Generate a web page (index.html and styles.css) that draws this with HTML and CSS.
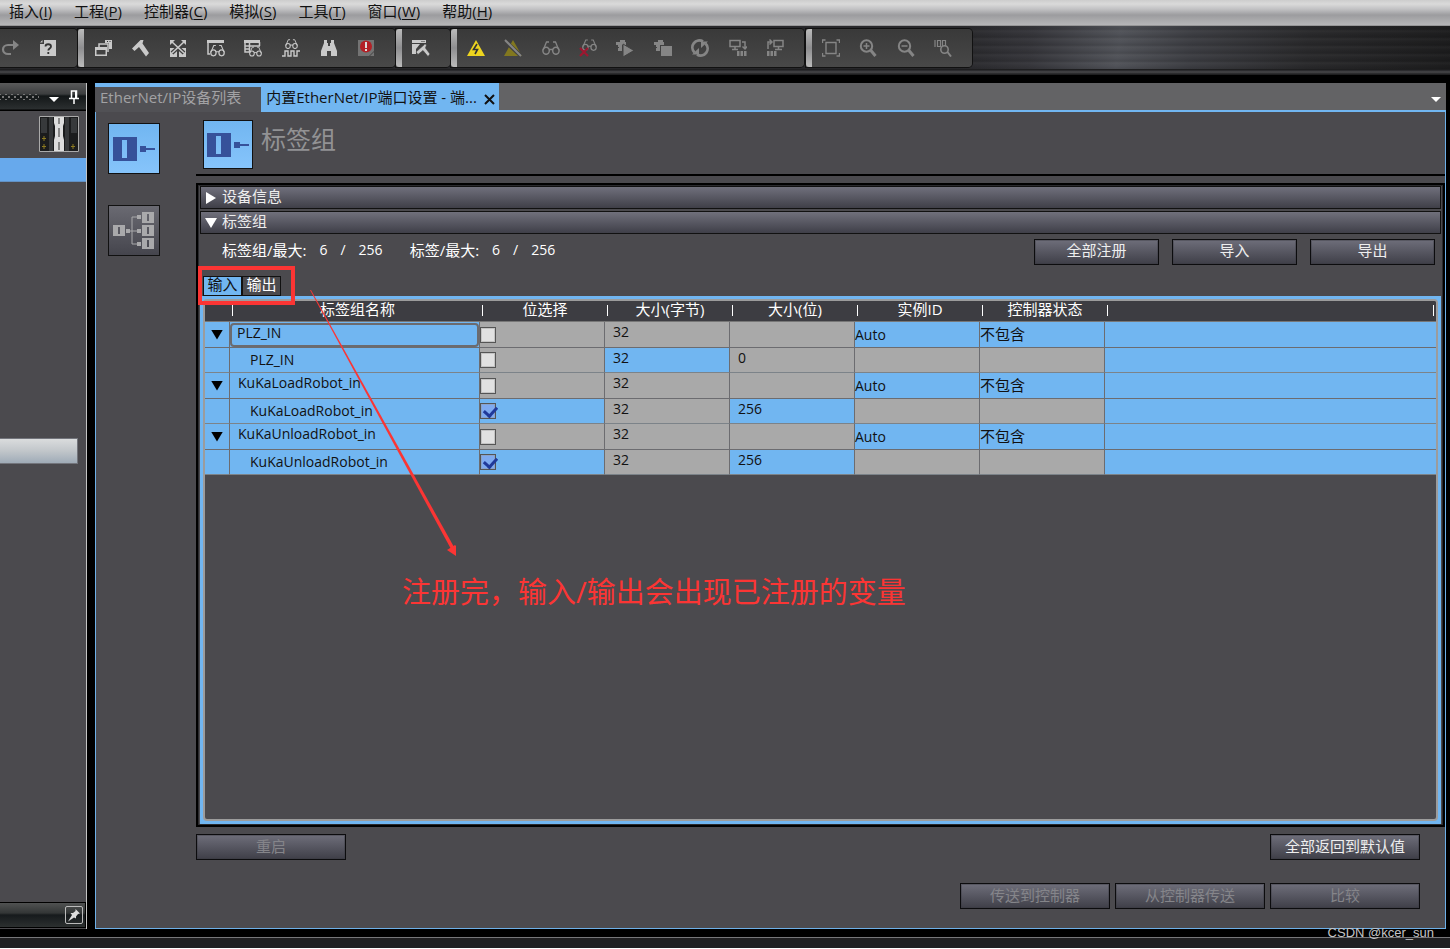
FILE: index.html
```html
<!DOCTYPE html>
<html lang="zh-CN">
<head>
<meta charset="utf-8">
<title>内置EtherNet/IP端口设置</title>
<link rel="stylesheet" href="styles.css">
</head>
<body>
<svg class="defs" width="0" height="0" aria-hidden="true">
  <defs>
    <symbol id="glasses" viewBox="0 0 18 14">
      <path d="M1.200 9 4.500 1H7M16.800 9 13.500 1H11M7 8.500h4" fill="none" stroke="currentColor" stroke-width="1.300"/>
      <ellipse cx="4.100" cy="9.800" rx="3.200" ry="3.500" fill="none" stroke="currentColor" stroke-width="1.500"/>
      <ellipse cx="13.900" cy="9.800" rx="3.200" ry="3.500" fill="none" stroke="currentColor" stroke-width="1.500"/>
    </symbol>
    <symbol id="tag" viewBox="0 0 42 24">
      <path fill="#36519a" fill-rule="evenodd" d="M0 0h24v24H0zM9 3v18h5V3z"/>
      <path fill="#36519a" d="M27 9h6v2h9v2h-9v2h-6z"/>
    </symbol>
  </defs>
</svg>
<div class="app">
  <nav class="menubar" aria-label="主菜单">
    <button>插入(<u>I</u>)</button>
    <button>工程(<u>P</u>)</button>
    <button>控制器(<u>C</u>)</button>
    <button>模拟(<u>S</u>)</button>
    <button>工具(<u>T</u>)</button>
    <button>窗口(<u>W</u>)</button>
    <button>帮助(<u>H</u>)</button>
  </nav>

  <div class="toolbar" role="toolbar" aria-label="工具栏">
    <div class="group group-first">
      <div class="tools tools-2">
        <button class="dim" aria-label="重做"><svg viewBox="0 0 18 18"><path d="M13 6H7a5 4.500 0 0 0 0 9h3" fill="none" stroke="currentColor" stroke-width="2.200"/><path d="M12 1l6 5-6 5z" fill="currentColor"/></svg></button>
        <button aria-label="帮助"><svg viewBox="0 0 18 18"><path d="M5 1h12v16H1V5h4zM1 3.500 3.500 1v2.500z" fill="currentColor"/><path d="M6.500 7.500C6.500 4.500 12 4.500 12 7.500c0 2-2.700 2-2.700 4M9.300 13v2" fill="none" stroke="#333" stroke-width="1.800"/></svg></button>
      </div>
    </div>
    <div class="group">
      <span class="grip"></span>
      <div class="tools tools-8">
        <button aria-label="窗口切换"><svg viewBox="0 0 18 18"><path d="M11 1h7v9h-3V4h-4z" fill="currentColor"/><path d="M13 2.500h1M15.500 2.500h1" stroke="#333"/><path d="M5 8V5h9v8" fill="none" stroke="currentColor" stroke-width="1.500"/><path d="M1 8h12v9H1zm1.500 3v4.500h9V11z" fill="currentColor" fill-rule="evenodd"/></svg></button>
        <button aria-label="构建"><svg viewBox="0 0 18 18"><path d="M1 9.500 9.500 1h3l-1 3.500L18 14l-3 3.500L8 8l-4.500 4z" fill="currentColor"/></svg></button>
        <button aria-label="重新构建"><svg viewBox="0 0 18 18"><path d="M1 9h7v9H1zM10 9h7v9h-7z" fill="currentColor"/><path d="M3 3l12 11M15 3 3 14" stroke="#404040" stroke-width="4"/><path d="M2 2l13 12M16 2 3 14" stroke="currentColor" stroke-width="1.600"/><path d="M1 1h5L1 6zM17 1h-5l5 5z" fill="currentColor"/></svg></button>
        <button aria-label="监视窗口"><svg viewBox="0 0 18 18"><path d="M0 1h17v3H0z" fill="currentColor"/><path d="M1 3v12h2" fill="none" stroke="currentColor" stroke-width="1.500"/><use href="#glasses" x="3" y="5" width="15" height="13"/></svg></button>
        <button aria-label="监视表"><svg viewBox="0 0 18 18"><path d="M0 1h16v3H0z" fill="currentColor"/><path d="M1 4v9h5M1 7h15M1 10h5M5.500 3v10M15.500 3v4" fill="none" stroke="currentColor" stroke-width="1.500"/><use href="#glasses" x="5" y="7" width="13" height="11"/></svg></button>
        <button aria-label="数据跟踪"><svg viewBox="0 0 18 18"><use href="#glasses" x="3" y="0" width="13" height="10"/><path d="M0 17h3v-5h3v5h3v-5h3v5h3v-5h3" fill="none" stroke="currentColor" stroke-width="1.400"/></svg></button>
        <button aria-label="查找"><svg viewBox="0 0 18 18"><path d="M4 1h3v3h1v3h2V4h1V1h3v3l3 8v5h-6v-5H7v5H1v-5l3-8z" fill="currentColor"/></svg></button>
        <button aria-label="错误"><svg viewBox="0 0 18 18"><path d="M1 1h16v11l-5 5H1z" fill="#737373"/><path d="M17 13v4h-4z" fill="#737373"/><circle cx="9" cy="7.500" r="6" fill="#b32026"/><path d="M9 3v6M9 10v2" stroke="#ddd" stroke-width="2"/></svg></button>
      </div>
    </div>
    <div class="group">
      <span class="grip"></span>
      <div class="tools tools-1">
        <button aria-label="选项工具"><svg viewBox="0 0 18 18"><path d="M0 1h14v3H0zM0 5h8l-4 5v5H0zM12 5h2v1l-2 1z" fill="currentColor"/><path d="M9.500 2.500h1M11.500 2.500h1" stroke="#333"/><path d="M4 13l9-8 1.500 1-1 3L18 15l-2 2.500-5-6-5 4z" fill="currentColor" stroke="#404040" stroke-width=".6"/></svg></button>
      </div>
    </div>
    <div class="group">
      <span class="grip"></span>
      <div class="tools tools-9">
        <button aria-label="在线"><svg viewBox="0 0 18 18"><path d="M9 1l9 16H0z" fill="#eed51f"/><path d="M10 5 6.500 10.500h4L8 15" fill="none" stroke="#333" stroke-width="1.600"/></svg></button>
        <button aria-label="离线"><svg viewBox="0 0 18 18"><path d="M9 1l9 16H0z" fill="#82781f"/><path d="M0 1l17 16" stroke="#404040" stroke-width="4"/><path d="M1 1l16 16" stroke="#858585" stroke-width="2"/></svg></button>
        <button class="dim" aria-label="监视"><svg viewBox="0 0 18 18"><use href="#glasses" x="0" y="2" width="18" height="14"/></svg></button>
        <button class="dim" aria-label="停止监视"><svg viewBox="0 0 18 18"><use href="#glasses" x="3" y="0" width="15" height="12"/><path d="M1 9l8 8M9 9l-8 8" stroke="#9d1730" stroke-width="2.200"/></svg></button>
        <button class="dim" aria-label="运行"><svg viewBox="0 0 18 18"><path d="M4 1h5v2h1v3H6v6H2V9h1V8H2V6H0V3h4z" fill="currentColor"/><path d="M7 5l11 6.500L7 18z" fill="currentColor" stroke="#424242"/></svg></button>
        <button class="dim" aria-label="停止"><svg viewBox="0 0 18 18"><path d="M4 1h5v2h1v3H6v6H2V9h1V8H2V6H0V3h4z" fill="currentColor"/><path d="M7 7h11v10H7z" fill="currentColor"/></svg></button>
        <button class="dim" aria-label="同步"><svg viewBox="0 0 18 18"><path d="M12 2.500A7 7 0 0 0 3.500 13.500M6 15.500A7 7 0 0 0 14.500 4.500" fill="none" stroke="currentColor" stroke-width="2.800"/><path d="M1 15.500h7V9zM17 2.500h-7V9z" fill="currentColor"/></svg></button>
        <button class="dim" aria-label="传送到控制器"><svg viewBox="0 0 18 18"><path d="M1 1.500h10v6H1zM6 7.500V10M3 10.500h6M13 3h3v6M13.500 7.500l2.500 2.500 2-2.500" fill="none" stroke="currentColor" stroke-width="1.500"/><path d="M8 12h2.500v5H8zM11.500 12H14v5h-2.500zM15 12h2.500v5H15z" fill="currentColor"/></svg></button>
        <button class="dim" aria-label="从控制器传送"><svg viewBox="0 0 18 18"><path d="M8 1.500h9v6H8zM12.500 7.500V10M9 10.500h7M2 10V3h4M3.500 .5 6 3 3.500 5.500" fill="none" stroke="currentColor" stroke-width="1.500"/><path d="M1 12h2.500v5H1zM4.500 12H7v5H4.500zM8 12h2.500v5H8z" fill="currentColor"/></svg></button>
      </div>
    </div>
    <div class="group group-last">
      <span class="grip"></span>
      <div class="tools tools-4">
        <button class="dim" aria-label="适合窗口"><svg viewBox="0 0 18 18"><path d="M4 3.500h10v11H4zM.500 4V1h3M14.500 1h3v3M.500 14v3h3M14.500 17h3v-3" fill="none" stroke="currentColor" stroke-width="1.400"/></svg></button>
        <button class="dim" aria-label="放大"><svg viewBox="0 0 18 18"><circle cx="7.500" cy="7" r="5.700" fill="none" stroke="currentColor" stroke-width="2"/><path d="M4.500 7h6M7.500 4v6" stroke="currentColor" stroke-width="1.500"/><path d="M11.500 11l5 6" stroke="currentColor" stroke-width="3"/></svg></button>
        <button class="dim" aria-label="缩小"><svg viewBox="0 0 18 18"><circle cx="7.500" cy="7" r="5.700" fill="none" stroke="currentColor" stroke-width="2"/><path d="M4.500 7h6" stroke="currentColor" stroke-width="1.500"/><path d="M11.500 11l5 6" stroke="currentColor" stroke-width="3"/></svg></button>
        <button class="dim" aria-label="实际大小"><svg viewBox="0 0 18 18"><path d="M1 1v7M3.500 1.500h3v6h-3zM8.500 1.500h3v6h-3z" fill="none" stroke="currentColor" stroke-width="1.200"/><circle cx="10.500" cy="10.500" r="3.700" fill="#424242" stroke="currentColor" stroke-width="1.600"/><path d="M13.500 13l3.500 4.500" stroke="currentColor" stroke-width="2"/></svg></button>
      </div>
    </div>
  </div>

  <div class="workspace">
    <aside class="sidebar">
      <div class="side-head">
        <span class="dots"></span>
        <svg class="caret" viewBox="0 0 10 5"><path d="M0 0h10L5 5z" fill="#fff"/></svg>
        <svg class="pin" viewBox="0 0 10 14"><path d="M2.500 8V1h5v7M0 8.500h10M5 9v5" fill="none" stroke="#fff" stroke-width="1.500"/><path d="M6 1h2v7H6z" fill="#fff"/></svg>
      </div>
      <div class="thumb-row">
        <svg class="thumb" viewBox="0 0 40 36"><path fill="#1b1c1d" d="M0 0h40v36H0z"/><path d="M2 2h6v15H2zM10 1h4v34h-4zM26 1h4v34h-4zM32 2h6v15h-6z" fill="#37393b"/><path d="M15 1h10v6l-1 3v10l1 4v11H15V24l1-4V10l-1-3z" fill="#ddd"/><path d="M19 2h2v6h-2zM19 12h2v9h-2zM19 26h2v8h-2z" fill="#888"/><path d="M5 20v5M3 22.500h4M5 28v5M3 30.500h4M34 28v5M32 30.500h4" stroke="#8d7a20"/><path d="M.5.5h39v35H.5z" fill="none" stroke="#aaa"/></svg>
      </div>
      <div class="side-selected"></div>
      <div class="side-space"></div>
      <div class="side-bar"></div>
      <div class="side-fill"></div>
      <div class="side-foot">
        <button aria-label="固定"><svg viewBox="0 0 14 14"><path d="M8.500 1 13 5.500l-2 .5-2 2.500v2L7 9.500 1 13.500 5 7 3.500 5H6l2.500-2z" fill="#ddd"/></svg></button>
      </div>
    </aside>

    <main class="main">
      <div class="tabstrip">
        <button class="doc-tab">EtherNet/IP设备列表</button>
        <button class="doc-tab doc-tab-active"><span>内置EtherNet/IP端口设置 - 端...</span><svg viewBox="0 0 11 11"><path d="M1 1l9 9M10 1l-9 9" stroke="#111" stroke-width="2"/></svg></button>
        <div class="strip-rest"><svg viewBox="0 0 10 5"><path d="M0 0h10L5 5z" fill="#fff"/></svg></div>
      </div>

      <div class="page">
        <div class="views">
          <button class="view view-active" aria-label="标签组"><svg viewBox="0 0 42 24"><use href="#tag"/></svg></button>
          <button class="view" aria-label="连接"><svg viewBox="0 0 42 40"><g fill="#a9a9ab"><path fill-rule="evenodd" d="M0 14h12v11H0zM5 16v7h2v-7zM29 1h12v11H29zM34 3v7h2V3zM29 14h12v11H29zM34 16v7h2v-7zM29 27h12v11H29zM34 29v7h2v-7z"/><path d="M13 18h4v4h-4zM24 4h4v4h-4zM24 18h4v4h-4zM24 31h4v4h-4z"/></g><path d="M16 20h9M25 6h-6v27h6" fill="none" stroke="#a9a9ab"/></svg></button>
        </div>

        <div class="content">
          <header class="title">
            <span class="title-icon"><svg viewBox="0 0 42 24"><use href="#tag"/></svg></span>
            <h1>标签组</h1>
          </header>

          <section class="panel">
            <button class="fold"><svg viewBox="0 0 12 12"><path d="M1 0l10 6-10 6z" fill="#fff"/></svg>设备信息</button>
            <button class="fold"><svg viewBox="0 0 12 12"><path d="M0 1h12L6 11z" fill="#fff"/></svg>标签组</button>

            <div class="info">
              <div class="count"><span>标签组/最大:</span><span class="n">6</span><span class="n">/</span><span class="n">256</span></div>
              <div class="count"><span>标签/最大:</span><span class="n">6</span><span class="n">/</span><span class="n">256</span></div>
              <div class="actions">
                <button class="btn">全部注册</button>
                <button class="btn">导入</button>
                <button class="btn">导出</button>
              </div>
            </div>

            <div class="io-tabs">
              <button class="io io-active">输入</button><button class="io">输出</button>
            </div>

            <div class="grid-frame">
              <div class="grid-inner">
                <table>
                  <colgroup><col class="c-toggle"><col class="c-name"><col class="c-std"><col class="c-std"><col class="c-std"><col class="c-std"><col class="c-std"><col></colgroup>
                  <thead>
                    <tr><td></td><th>标签组名称</th><th>位选择</th><th>大小(字节)</th><th>大小(位)</th><th>实例ID</th><th>控制器状态</th><th class="last"></th></tr>
                  </thead>
                  <tbody>
                    <tr class="parent"><td><button class="toggle" aria-label="折叠"></button></td><td class="edit"><input type="text" value="PLZ_IN" aria-label="标签组名称"></td><td class="off check"><input type="checkbox" aria-label="位选择"></td><td class="off num">32</td><td class="off"></td><td class="pick">Auto</td><td class="pick-cn">不包含</td><td></td></tr>
                    <tr class="child"><td></td><td class="name">PLZ_IN</td><td class="off check"><input type="checkbox" aria-label="位选择"></td><td class="num">32</td><td class="off num">0</td><td class="off"></td><td class="off"></td><td></td></tr>
                    <tr class="parent"><td><button class="toggle" aria-label="折叠"></button></td><td class="num">KuKaLoadRobot_in</td><td class="off check"><input type="checkbox" aria-label="位选择"></td><td class="off num">32</td><td class="off"></td><td class="pick">Auto</td><td class="pick-cn">不包含</td><td></td></tr>
                    <tr class="child"><td></td><td class="name">KuKaLoadRobot_in</td><td class="check"><input type="checkbox" checked aria-label="位选择"></td><td class="off num">32</td><td class="num">256</td><td class="off"></td><td class="off"></td><td></td></tr>
                    <tr class="parent"><td><button class="toggle" aria-label="折叠"></button></td><td class="num">KuKaUnloadRobot_in</td><td class="off check"><input type="checkbox" aria-label="位选择"></td><td class="off num">32</td><td class="off"></td><td class="pick">Auto</td><td class="pick-cn">不包含</td><td></td></tr>
                    <tr class="child"><td></td><td class="name">KuKaUnloadRobot_in</td><td class="check"><input type="checkbox" checked aria-label="位选择"></td><td class="off num">32</td><td class="num">256</td><td class="off"></td><td class="off"></td><td></td></tr>
                  </tbody>
                </table>
              </div>
            </div>

            <div class="mark-box"></div>
            <svg class="mark-arrow" width="150" height="268" viewBox="0 0 150 268"><path d="M0 0h1l143 257-3 2z" fill="#fb3534"/><path d="M146 266l-9-6 8-5 1 1z" fill="#fb3534"/></svg>
            <p class="mark-text">注册完，输入/输出会出现已注册的变量</p>
          </section>

          <div class="row-a">
            <button class="btn btn-wide" disabled>重启</button>
            <button class="btn btn-wide">全部返回到默认值</button>
          </div>
          <div class="row-b">
            <button class="btn btn-wide" disabled>传送到控制器</button>
            <button class="btn btn-wide" disabled>从控制器传送</button>
            <button class="btn btn-wide" disabled>比较</button>
          </div>
        </div>
      </div>
    </main>
  </div>

  <footer class="status"><span class="credit">CSDN @kcer_sun</span></footer>
</div>
</body>
</html>
```

FILE: styles.css
```css
* { box-sizing: border-box; }

body {
  margin: 0;
  background: #fff;
  font-family: "Open Sans", "Noto Sans CJK SC", sans-serif;
  font-size: 15px;
  line-height: 20px;
}

button, input { font: inherit; margin: 0; }
button { padding: 0; border: 0; background: none; color: inherit; }
svg { display: block; }
.defs { position: absolute; }

.app {
  display: flex;
  flex-direction: column;
  height: calc(100vh - 1px);
  background: #000;
  overflow: hidden;
}

/* Menu */
.menubar {
  flex: none;
  display: flex;
  gap: 22px;
  height: 26px;
  padding: 1px 9px 5px;
  background: linear-gradient(#cdcdcd 0, #dadada 4px, #c2c2c4 9px, #9c9c9f 15px, #b6b6b8 25px, #777 26px);
  color: #111;
}
.menubar u { text-underline-offset: 2px; }

/* Toolbar */
.toolbar {
  flex: none;
  display: flex;
  gap: 1px;
  height: 49px;
  padding: 3px 0 8px;
  background:
    linear-gradient(#111, #2b2b2e 1px, #2b2b2e 2px, #525254 3px, #2b2b2d 4px, #2b2b2d 5px, #111) bottom / 100% 6px no-repeat,
    repeating-linear-gradient(#0000 0, #00000018 3px, #ffffff08 5px, #0000 8px),
    linear-gradient(97deg, #29292c 66%, #35353a 71%, #505258 77%, #3c3d42 82%, #29292b 90%, #1c1c1d);
}
.group {
  display: flex;
  padding-right: 10px;
  background: linear-gradient(#393939, #484848);
  border-radius: 0 4px 4px 0;
  box-shadow: 0 0 0 1px #111;
}
.group-first { margin-left: -9px; }
.group-last { margin-left: 1px; }
.grip {
  width: 6px;
  border-radius: 3px 0 0 3px;
  background: linear-gradient(#bbb, #8e8e90 50%, #bbb);
}
.tools { display: grid; grid-auto-flow: column; grid-auto-columns: 1fr; }
.tools-1 { width: 38px; }
.tools-2 { width: 76px; }
.tools-4 { width: 150px; }
.tools-8 { width: 301px; }
.tools-9 { width: 337px; }
.tools button { display: grid; place-items: center; color: #c9c9c9; }
.tools .dim { color: #858585; }
.tools svg { width: 18px; height: 18px; }

/* Workspace */
.workspace { flex: 1; min-height: 0; display: flex; gap: 8px; padding: 8px 4px 8px 0; }

.sidebar {
  flex: none;
  display: flex;
  flex-direction: column;
  width: 87px;
  border-right: 1px solid #c4c4c4;
  background: #4b4a4e;
}
.side-head {
  display: flex;
  align-items: center;
  gap: 10px;
  height: 28px;
  padding-right: 7px;
  background: linear-gradient(#5a5a5a, #3c3e3f 11px, #131718 13px, #2b2f30 26px, #000 27px);
}
.dots {
  flex: 1;
  height: 6px;
  background: radial-gradient(circle, #777 1px, #0000 1px) 0 0 / 6px 6px, radial-gradient(circle, #777 1px, #0000 1px) 3px 3px / 6px 6px;
}
.caret { width: 10px; height: 5px; margin-top: 4px; }
.pin { width: 10px; height: 14px; }
.thumb-row { display: flex; justify-content: flex-end; padding: 5px 7px 6px; }
.thumb { width: 40px; height: 36px; }
.side-selected { height: 24px; background: #67a9ec; border-bottom: 1px solid #6291c4; }
.side-space { flex: 256; }
.side-bar {
  height: 26px;
  margin-right: 8px;
  border: solid #73757c;
  border-width: 1px 1px 1px 0;
  background: linear-gradient(#dadcdd, #c1c6ca 50%, #9fabb7);
}
.side-fill { flex: 439; }
.side-foot {
  display: flex;
  align-items: center;
  justify-content: flex-end;
  height: 26px;
  padding-right: 2px;
  margin-bottom: 1px;
  border: solid #000;
  border-width: 1px 1px 1px 0;
  background: linear-gradient(#505252, #333636 10px, #161a1c 12px, #2c3030);
}
.side-foot button { padding: 1px; border: 1px solid #bbb; border-radius: 2px; }
.side-foot svg { width: 14px; height: 14px; }

.main { flex: 1; min-width: 0; display: flex; flex-direction: column; }
.tabstrip { flex: none; display: flex; height: 29px; }
.doc-tab {
  padding: 0 20px 5px 5px;
  border-top: 4px solid #71b6f1;
  background: #515155;
  color: #a2a2a4;
}
.doc-tab-active {
  display: flex;
  align-items: center;
  gap: 7px;
  padding: 0 4px 5px 5px;
  background: #71b6f1;
  color: #111;
}
.doc-tab svg { width: 11px; height: 11px; margin-top: 5px; }
.strip-rest {
  flex: 1;
  display: flex;
  align-items: center;
  justify-content: flex-end;
  padding: 6px 5px 0 0;
  border-bottom: 2px solid #71b6f1;
  background: #636365;
}
.strip-rest svg { width: 10px; height: 5px; }

.page {
  flex: 1;
  min-height: 0;
  display: flex;
  border: solid #6db0e8;
  border-width: 0 1px 1px;
  background: #4b4a4e;
}
.views { flex: none; width: 100px; padding: 11px 12px; display: flex; flex-direction: column; gap: 31px; }
.view {
  display: grid;
  place-items: center;
  width: 52px;
  height: 51px;
  border: 1px solid #111;
  background: linear-gradient(#6a6a72, #45454d);
}
.view svg { width: 42px; }
.view-active, .title-icon { background: linear-gradient(#71b6f1, #86c4fb); }

.content { flex: 1; min-width: 0; display: flex; flex-direction: column; }
.title {
  flex: none;
  display: flex;
  gap: 8px;
  height: 64px;
  padding: 8px 7px 0;
  border-bottom: 2px solid #000;
}
.title-icon {
  display: grid;
  place-items: center;
  width: 50px;
  height: 49px;
  border: 1px solid #111;
}
.title-icon svg { width: 42px; }
h1 { margin: 0; font-size: 25px; line-height: 38px; font-weight: 400; color: #929294; }

.panel {
  position: relative;
  flex: 1;
  display: flex;
  flex-direction: column;
  margin-top: 7px;
  padding: 1px 2px 1px 2px;
  border: 2px solid #000;
  box-shadow: inset 0 0 0 1px #2a2a2d;
}
.fold {
  display: flex;
  align-items: center;
  gap: 5px;
  height: 23px;
  margin-bottom: 2px;
  padding: 0 4px 4px;
  border: 1px solid #111;
  background: linear-gradient(#70707c, #3f3f48);
  color: #eee;
}
.fold svg { width: 12px; height: 12px; margin-top: 4px; }

.info { display: flex; gap: 27px; padding: 3px 6px 0 22px; color: #fff; line-height: 22px; }
.count { display: flex; gap: 13px; }
.n { font-size: 14px; }
.actions { display: flex; gap: 13px; margin-left: auto; }
.btn {
  width: 125px;
  height: 26px;
  padding-bottom: 4px;
  border: 1px solid #0c0c0e;
  background: linear-gradient(#6e6e7a, #3f3f48);
  box-shadow: inset 0 0 0 1px #3a3a4266;
  color: #eee;
  line-height: 20px;
}
.btn:disabled { color: #85858a; }
.btn-wide { width: 150px; padding-bottom: 2px; }

.io-tabs { display: flex; padding: 11px 3px 0; }
.io { width: 39px; height: 20px; padding-bottom: 4px; border: 1px solid #111; color: #fff; line-height: 14px; }
.io-active { background: #71b6f1; color: #111; }

.grid-frame { flex: 1; padding: 3px; background: #71b6f1; }
.grid-inner { height: 100%; border: 2px solid #9c9c9c; border-radius: 4px; background: #4b4a4e; overflow: hidden; }

table { width: 100%; table-layout: fixed; border-collapse: separate; border-spacing: 0; color: #111; }
.c-toggle { width: 25px; }
.c-name { width: 250px; }
.c-std { width: 125px; }
td, th { padding: 0; font-weight: 400; }
thead tr { height: 21px; }
thead td, th { background: #3d3d42; color: #fff; border-bottom: 1px solid #777; }
th {
  padding: 0 0 4px 5px;
  line-height: 16px;
  background: linear-gradient(#fff, #fff) 2px 4px / 1px 11px no-repeat #3d3d42;
}
th.last {
  background:
    linear-gradient(#fff, #fff) 2px 4px / 1px 11px no-repeat,
    linear-gradient(#fff, #fff) right 2px top 4px / 1px 11px no-repeat #3d3d42;
}
.parent { height: 26px; }
.child { height: 25px; }
tbody td {
  border: solid #6c6c70;
  border-width: 0 1px 1px 0;
  background: #71b6f1;
  font-size: 14px;
  line-height: 20px;
}
tbody td:last-child { border-right: 0; }
tbody .child td { border-bottom-color: #7c8389; }
tbody .off { background: #a9a9a9; }
.num { padding-left: 8px; vertical-align: top; }
.name { padding-left: 20px; }
tbody .pick-cn { padding-bottom: 2px; font-size: 15px; }
.toggle { display: block; width: 12px; height: 10px; margin-left: 6px; background: #000; clip-path: polygon(0 0, 100% 0, 50% 100%); }
.edit input {
  display: block;
  width: 100%;
  height: 24px;
  padding: 0 5px 4px;
  border: 2px solid #6b6b6f;
  border-radius: 4px;
  background: #71b6f1;
  color: #111;
}
.check input {
  appearance: none;
  display: block;
  width: 16px;
  height: 16px;
  border: 1px solid #555;
  box-shadow: inset 0 0 0 1px #9996;
  background: #e1e1e1;
}
.check input:checked { background: #7eaaf0; }
.check input:checked::after {
  content: "";
  display: block;
  width: 6px;
  height: 10px;
  margin: 0 0 0 5px;
  border: solid #203a9a;
  border-width: 0 3px 3px 0;
  transform: rotate(42deg);
}

/* Annotation */
.mark-box { position: absolute; left: 0; top: 81px; width: 97px; height: 39px; border: 4px solid #fb3534; }
.mark-arrow { position: absolute; left: 112px; top: 105px; }
.mark-text { position: absolute; left: 204px; top: 387px; margin: 0; color: #fb3534; font-size: 29px; line-height: 40px; white-space: nowrap; }

.row-a { flex: none; display: flex; justify-content: space-between; padding: 7px 25px 0 0; }
.row-b { flex: none; display: flex; justify-content: flex-end; gap: 5px; padding: 23px 25px 19px 0; }

.status {
  flex: none;
  position: relative;
  height: 11px;
  border-top: 1px solid #77777a;
  background: #202022;
}
.credit {
  position: absolute;
  right: 16px;
  top: -15px;
  color: #c4c4c6;
  font: 13px/20px "Liberation Sans", sans-serif;
}
```
